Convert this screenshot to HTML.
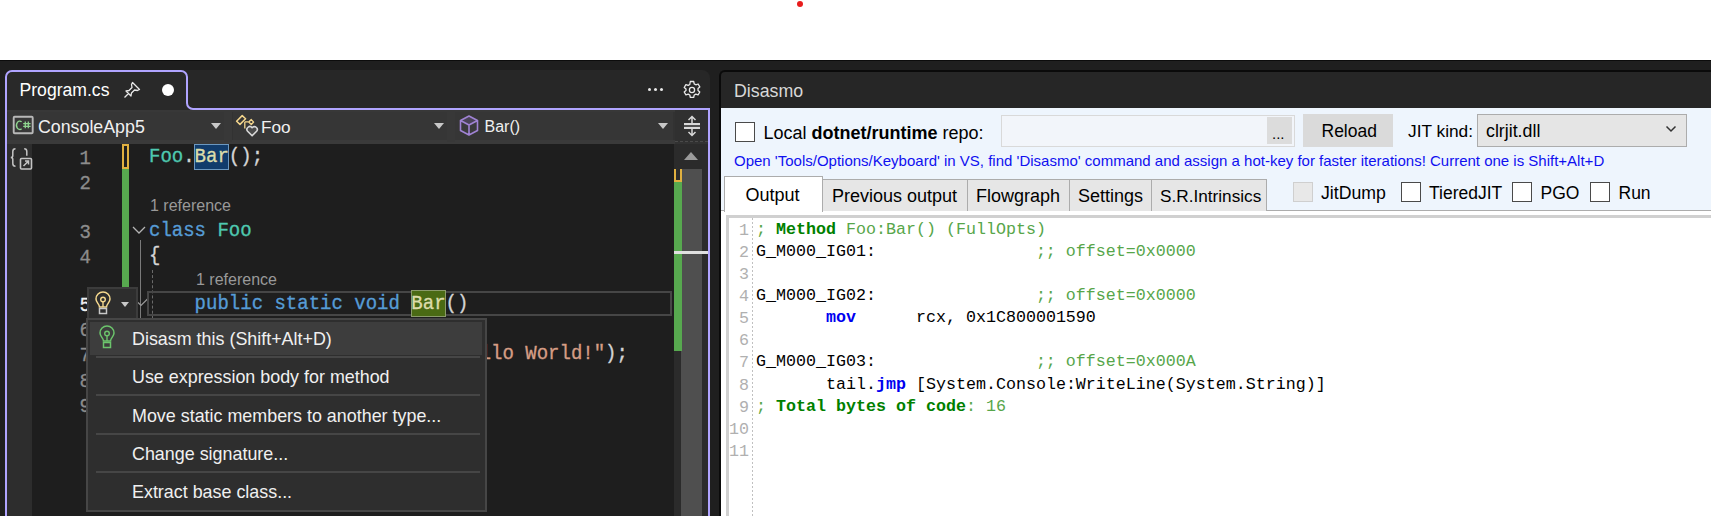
<!DOCTYPE html>
<html><head><meta charset="utf-8">
<style>
*{margin:0;padding:0;box-sizing:border-box}
html,body{width:1711px;height:516px;overflow:hidden;background:#fff;position:relative}
body{font-family:"Liberation Sans",sans-serif}
.a{position:absolute}
.t{position:absolute;line-height:1;white-space:pre;font-family:"Liberation Sans",sans-serif}
.m{position:absolute;line-height:1;white-space:pre;font-family:"Liberation Mono",monospace}
#ide{left:0;top:60px;width:1711px;height:456px;background:#1f1f1f;border-top:1px solid #0c0c0c}
#strip{left:5px;top:70px;width:705px;height:40px;background:#272727;border-radius:8px 8px 0 0}
#tab{left:5px;top:70px;width:183px;height:40px;background:#292929;border:2px solid #b0a4ff;border-bottom:none;border-radius:7px 7px 0 0}
#editframe{left:5px;top:108px;width:705px;height:420px;border:2px solid #b0a4ff;border-bottom:none}
#navbar{left:7px;top:110px;width:701px;height:34px;background:#323232}
.dd{position:absolute;top:112px;height:28px;background:#363636}
.tri{position:absolute;width:0;height:0;border-left:5px solid transparent;border-right:5px solid transparent;border-top:6px solid #c8c8c8}
.c{font-size:21px;color:#d4d4d4;left:149px;-webkit-text-stroke:0.35px currentColor;transform:scaleX(0.9048);transform-origin:0 0}
.ln{font-size:21px;color:#8c8c8c;-webkit-text-stroke:0.3px currentColor;width:60px;left:31px;text-align:right;transform:scaleX(0.9048);transform-origin:100% 0}
.kw{color:#569cd6}.ty{color:#4ec9b0}.me{color:#dcdcaa}.st{color:#d69d85}
.lens{font-size:16px;color:#999}
#rp{left:719px;top:70px;width:992px;height:446px;background:#262626;border-radius:6px 0 0 0;border:2px solid #0a0a0a;border-right:none;border-bottom:none}
#rbody{left:721px;top:108px;width:990px;height:408px;background:#eef5fd}
.tabh{position:absolute;top:179px;height:32px;background:#e6e6e6;border:1px solid #acacac;border-bottom:none}
.cbx{position:absolute;top:182px;width:20px;height:20px;background:#fff;border:1.5px solid #4a4a4a}
.o{font-size:16.67px;color:#000;left:756px}
.oln{font-size:16.67px;color:#b0b0b0;left:700px;width:49px;text-align:right}
.cg{color:#57a64a}.cgb{color:#008000;font-weight:bold}.asm{color:#0000f0;font-weight:bold}
.mi{font-size:17.9px;color:#f0f0f0;left:132px}
.sep{position:absolute;left:96px;width:384px;height:2px;background:#464646}
</style></head>
<body>
<div class="a" style="left:797px;top:1px;width:6px;height:6px;border-radius:50%;background:#e81c1c"></div>

<div id="ide" class="a"></div>
<div id="strip" class="a"></div>
<div class="a" style="left:5px;top:70px;width:183px;height:40px;background:#292929;border-radius:7px 7px 0 0"></div>
<div class="t" style="left:19.5px;top:82.1px;font-size:17.6px;color:#fff">Program.cs</div>
<!-- pin -->
<svg class="a" style="left:123px;top:81px" width="18" height="18" viewBox="0 0 18 18"><path d="M9.5 1.5 L16.5 8.5 L14.5 9.5 L11.5 9 L8.5 12 L8 15 L3 10 L6 9.5 L9 6.5 L8.5 3.5 Z M5.5 12.5 L1.5 16.5" fill="none" stroke="#e8e8e8" stroke-width="1.3" stroke-linejoin="round"/></svg>
<div class="a" style="left:162px;top:84px;width:12px;height:12px;border-radius:50%;background:#fff"></div>
<!-- ... and gear -->
<div class="a" style="left:648px;top:88px;width:3px;height:3px;border-radius:50%;background:#e8e8e8;box-shadow:6px 0 0 #e8e8e8,12px 0 0 #e8e8e8"></div>
<svg class="a" style="left:682px;top:80px" width="20" height="20" viewBox="0 0 20 20"><path d="M8.3 1.5h3.4l.5 2.4 1.6.9 2.3-.8 1.7 2.9-1.8 1.6v1.9l1.8 1.6-1.7 2.9-2.3-.8-1.6.9-.5 2.4H8.3l-.5-2.4-1.6-.9-2.3.8-1.7-2.9 1.8-1.6V9.1L2.2 7.5l1.7-2.9 2.3.8 1.6-.9z" fill="none" stroke="#e8e8e8" stroke-width="1.3" stroke-linejoin="round"/><circle cx="10" cy="10" r="2.6" fill="none" stroke="#e8e8e8" stroke-width="1.3"/></svg>

<!-- nav bar -->
<div id="navbar" class="a"></div>
<div class="a" style="left:7px;top:110px;width:668px;height:2px;background:#383838"></div>
<div class="a" style="left:7px;top:140px;width:668px;height:4px;background:#3a3a3a"></div>
<div class="a" style="left:224px;top:110px;width:8px;height:32px;background:#383838"></div>
<div class="a" style="left:447px;top:110px;width:8px;height:32px;background:#383838"></div>
<div class="dd" style="left:8px;width:216px"></div>
<div class="dd" style="left:233px;width:214px"></div>
<div class="dd" style="left:455px;width:218px"></div>
<div class="a" style="left:675px;top:110px;width:33px;height:32px;background:#303030;border-bottom:1px dashed #4a4a4a"></div>
<!-- C# icon -->
<svg class="a" style="left:10px;top:112px" width="28" height="26" viewBox="10 112 28 26"><rect x="13.7" y="116.8" width="19" height="16.4" rx="1" fill="#383838" stroke="#b8b8b8" stroke-width="1.9"/><path d="M21.6 121.8 A3.3 4.2 0 1 0 21.6 128.8" fill="none" stroke="#8fd68f" stroke-width="1.3"/><path d="M25.3 121.6 V128.2 M28.3 121.6 V128.2 M23.2 123.6 H30.6 M23.2 126.3 H30.6" fill="none" stroke="#8fd68f" stroke-width="1.3"/></svg>
<div class="t" style="left:38px;top:118.5px;font-size:17.8px;color:#f0f0f0">ConsoleApp5</div>
<div class="tri" style="left:211px;top:123px"></div>
<!-- Foo icon -->
<svg class="a" style="left:230px;top:110px" width="32" height="30" viewBox="230 110 32 30"><path d="M236.6 121.2 L242.2 115.6 L245.6 118.8 L240 124.4 Z" fill="none" stroke="#f3d58c" stroke-width="1.5" stroke-linejoin="round"/><path d="M245 121.8 H248.6 M244.8 121.8 V128.6" fill="none" stroke="#f3d58c" stroke-width="1.3"/><path d="M248.8 122.1 L251.3 119.6 L253.6 122.1 L251.3 124.4 Z" fill="none" stroke="#f3d58c" stroke-width="1.4" stroke-linejoin="round"/><path d="M252.1 135.8 L247.6 131.3 A2.8 2.8 0 0 1 252.1 127.7 A2.8 2.8 0 0 1 256.6 131.3 Z" fill="#4a4a4a" stroke="#d8d8d8" stroke-width="1.6" stroke-linejoin="round"/></svg>
<div class="t" style="left:261px;top:118.9px;font-size:17.2px;color:#f0f0f0">Foo</div>
<div class="tri" style="left:434px;top:123px"></div>
<!-- cube icon -->
<svg class="a" style="left:459px;top:115px" width="20" height="21" viewBox="0 0 20 21"><path d="M10 1 L18.5 5.5 L10 10 L1.5 5.5 Z" fill="#4a4358"/><path d="M1.5 5.5 V15.5 L10 20 L18.5 15.5 V5.5 L10 10 Z" fill="#3a3a3c"/><path d="M10 1 L18.5 5.5 V15.5 L10 20 L1.5 15.5 V5.5 Z M1.5 5.5 L10 10 L18.5 5.5 M10 10 V20" fill="none" stroke="#a083d4" stroke-width="1.6" stroke-linejoin="round"/></svg>
<div class="t" style="left:484.5px;top:118.6px;font-size:16px;color:#f0f0f0">Bar()</div>
<div class="tri" style="left:658px;top:123px"></div>
<!-- splitter icon -->
<svg class="a" style="left:683px;top:115px" width="18" height="22" viewBox="0 0 18 22"><path d="M9 1.5 V20.5 M5.5 5 L9 1.5 L12.5 5 M5.5 17 L9 20.5 L12.5 17" fill="none" stroke="#d8d8d8" stroke-width="1.5"/><rect x="1" y="8" width="16" height="2" fill="#d8d8d8"/><rect x="1" y="12" width="16" height="2" fill="#d8d8d8"/><rect x="1" y="10" width="16" height="2" fill="#505050"/></svg>

<!-- editor -->
<div class="a" style="left:7px;top:144px;width:25px;height:372px;background:#2d2d2d"></div>
<div class="a" style="left:32px;top:144px;width:642px;height:372px;background:#1e1e1e"></div>
<!-- {} icon -->
<svg class="a" style="left:0;top:140px" width="40" height="36" viewBox="0 140 40 36"><path d="M15.5 148.8 Q12.8 148.8 12.8 151.5 V155.5 Q12.8 157.5 10.8 157.5 Q12.8 157.5 12.8 159.5 V163.5 Q12.8 166.3 15.5 166.3 M24.2 148.8 Q26.8 148.8 26.8 151.5 V155.8" fill="none" stroke="#c4c4c4" stroke-width="1.5"/><rect x="20.5" y="158.5" width="11" height="10.5" rx="1" fill="none" stroke="#c4c4c4" stroke-width="1.6"/><path d="M23.5 166 L28.5 161 M25 161 H28.5 V164.5" fill="none" stroke="#c4c4c4" stroke-width="1.5"/></svg>
<!-- change bars -->
<div class="a" style="left:122px;top:144px;width:7px;height:25px;border:2px solid #e0b040"></div>
<div class="a" style="left:122px;top:169px;width:7px;height:147px;background:#57a94f"></div>

<div class="m ln" style="top:147.71px">1</div>
<div class="m ln" style="top:173.11px">2</div>
<div class="m ln" style="top:221.81px">3</div>
<div class="m ln" style="top:247.21px">4</div>
<div class="m ln" style="top:294.61px;color:#f0f0f0">5</div>
<div class="m ln" style="top:320.01px">6</div>
<div class="m ln" style="top:345.41px">7</div>
<div class="m ln" style="top:370.81px">8</div>
<div class="m ln" style="top:396.21px">9</div>

<!-- selection on Bar line 1 -->
<div class="a" style="left:194px;top:144px;width:35px;height:26px;background:#113c6c;border:1px solid #6c98c0"></div>
<div class="m c" style="top:145.71px"><span class="ty">Foo</span>.<span class="me">Bar</span>();</div>
<div class="t lens" style="left:150px;top:197.57px">1 reference</div>
<!-- fold chevron -->
<svg class="a" style="left:132px;top:225px" width="14" height="10" viewBox="0 0 14 10"><path d="M1 2 L7 8 L13 2" fill="none" stroke="#b4b4b4" stroke-width="1.3"/></svg>
<div class="a" style="left:140px;top:240px;width:1px;height:170px;background:#7a7a7a"></div>
<div class="m c" style="top:219.81px"><span class="kw">class</span> <span class="ty">Foo</span></div>
<div class="m c" style="top:245.21px">{</div>
<div class="a" style="left:152px;top:270px;width:0;height:120px;border-left:1px dashed #6a6a6a"></div>
<div class="t lens" style="left:196px;top:272px">1 reference</div>
<svg class="a" style="left:136px;top:296px" width="14" height="12" viewBox="0 0 14 12"><path d="M2 6.5 L5 9.5 L12 2.5" fill="none" stroke="#9a9a9a" stroke-width="1.2"/></svg>
<!-- current line box -->
<div class="a" style="left:147px;top:291px;width:525px;height:25px;border:2px solid #464646"></div>
<div class="a" style="left:411px;top:290px;width:35px;height:27px;background:#4a6a14;border:1px solid #8a9a6a"></div>
<div class="m c" style="top:292.61px">    <span class="kw">public</span> <span class="kw">static</span> <span class="kw">void</span> <span class="me">Bar</span>()</div>
<div class="m c" style="top:318.01px">    {</div>
<div class="m c" style="top:343.41px">        Console.WriteLine(<span class="st">"Hello World!"</span>);</div>
<div class="m c" style="top:368.81px">    }</div>
<div class="m c" style="top:394.21px">}</div>

<!-- scrollbar -->
<div class="a" style="left:674px;top:144px;width:34px;height:372px;background:#2b2b2b"></div>
<div class="a" style="left:684px;top:152px;width:0;height:0;border-left:7px solid transparent;border-right:7px solid transparent;border-bottom:8px solid #9a9a9a"></div>
<div class="a" style="left:681px;top:169px;width:21px;height:347px;background:#4f4f4f"></div>
<div class="a" style="left:674px;top:169px;width:8px;height:13px;border:2px solid #e0b040;border-top:none"></div>
<div class="a" style="left:674px;top:182px;width:8px;height:169px;background:#57a94f"></div>
<div class="a" style="left:674px;top:251px;width:34px;height:3px;background:#e0e0e0"></div>

<!-- lightbulb button -->
<div class="a" style="left:87px;top:287px;width:51px;height:32px;background:#2d2d2d;border:2px solid #3c3c3c;border-bottom:none"></div>
<svg class="a" style="left:93px;top:291px" width="20" height="24" viewBox="0 0 20 24"><path d="M6.5 16 C6.5 13 3 11.5 3 8 A7 7 0 0 1 17 8 C17 11.5 13.5 13 13.5 16 Z" fill="none" stroke="#f5d88e" stroke-width="1.5"/><circle cx="10" cy="8.5" r="2.3" fill="none" stroke="#f5d88e" stroke-width="1.4"/><path d="M10 11 V16" stroke="#f5d88e" stroke-width="1.4"/><rect x="6.5" y="17.5" width="7" height="5" fill="none" stroke="#c8c8c8" stroke-width="1.5"/></svg>
<div class="tri" style="left:121px;top:302px;border-left-width:4.5px;border-right-width:4.5px;border-top-width:5px"></div>

<!-- popup -->
<div class="a" style="left:86px;top:318px;width:401px;height:194px;background:#2e2e2e;border:2px solid #464646"></div>
<div class="a" style="left:90px;top:322px;width:392px;height:33px;background:#3d3d3d"></div>
<svg class="a" style="left:97px;top:325px" width="20" height="24" viewBox="0 0 20 24"><path d="M6.5 16 C6.5 13 3 11.5 3 8 A7 7 0 0 1 17 8 C17 11.5 13.5 13 13.5 16 Z" fill="none" stroke="#6cc46c" stroke-width="1.5"/><circle cx="10" cy="8.5" r="2.3" fill="none" stroke="#6cc46c" stroke-width="1.4"/><path d="M10 11 V16" stroke="#6cc46c" stroke-width="1.4"/><rect x="6.5" y="17.5" width="7" height="5" fill="none" stroke="#6cc46c" stroke-width="1.5"/></svg>
<div class="sep" style="top:356px"></div>
<div class="sep" style="top:394px"></div>
<div class="sep" style="top:433px"></div>
<div class="sep" style="top:471px"></div>
<div class="t mi" style="top:331px">Disasm this (Shift+Alt+D)</div>
<div class="t mi" style="top:369px">Use expression body for method</div>
<div class="t mi" style="top:407.8px">Move static members to another type...</div>
<div class="t mi" style="top:445.5px">Change signature...</div>
<div class="t mi" style="top:483.5px">Extract base class...</div>

<svg class="a" style="left:0;top:0" width="720" height="516"><path d="M6 516 V77 A6 6 0 0 1 12 71 H181 A6 6 0 0 1 187 77 V103 A6 6 0 0 0 193 109 H709 V516" fill="none" stroke="#b0a4ff" stroke-width="2"/></svg>
<!-- RIGHT PANEL -->
<div id="rp" class="a"></div>
<div class="t" style="left:734px;top:82.6px;font-size:17.8px;color:#d8d8d8">Disasmo</div>
<div id="rbody" class="a"></div>

<div class="a" style="left:735px;top:122px;width:20px;height:20px;background:#fff;border:1.5px solid #4a4a4a"></div>
<div class="t" style="left:763.5px;top:123.85px;font-size:18px;color:#000">Local <b>dotnet/runtime</b> repo:</div>
<div class="a" style="left:1001px;top:115px;width:294px;height:32px;background:#f2f5fa;border:1px solid #d9d9d9"></div>
<div class="a" style="left:1267px;top:117px;width:25px;height:27px;background:#dcdcdc"></div>
<div class="t" style="left:1272px;top:126px;font-size:15px;color:#000">...</div>
<div class="a" style="left:1303px;top:114px;width:90px;height:33px;background:#dadada"></div>
<div class="t" style="left:1321.5px;top:122.88px;font-size:17.5px;color:#000">Reload</div>
<div class="t" style="left:1408px;top:122.88px;font-size:17.3px;color:#000">JIT kind:</div>
<div class="a" style="left:1477px;top:114px;width:210px;height:33px;background:#e5e5e5;border:1px solid #acacac"></div>
<div class="t" style="left:1486px;top:123.45px;font-size:17.8px;color:#000">clrjit.dll</div>
<svg class="a" style="left:1665px;top:125px" width="12" height="8" viewBox="0 0 12 8"><path d="M1.5 1.5 L6 6 L10.5 1.5" fill="none" stroke="#333" stroke-width="1.5"/></svg>
<div class="t" style="left:734px;top:153.09px;font-size:15px;color:#1010f0">Open 'Tools/Options/Keyboard' in VS, find 'Disasmo' command and assign a hot-key for faster iterations! Current one is Shift+Alt+D</div>

<!-- tabs -->
<div class="a" style="left:721px;top:210px;width:990px;height:1px;background:#acacac"></div>
<div class="a" style="left:721px;top:211px;width:990px;height:305px;background:#fff"></div>
<div class="tabh" style="left:822px;width:146px"></div>
<div class="tabh" style="left:967px;width:103px"></div>
<div class="tabh" style="left:1069px;width:83px"></div>
<div class="tabh" style="left:1151px;width:116px"></div>
<div class="a" style="left:724px;top:176px;width:99px;height:36px;background:#fff;border:1px solid #acacac;border-bottom:none"></div>
<div class="t" style="left:745.5px;top:185.75px;font-size:18px;color:#000">Output</div>
<div class="t" style="left:832px;top:187.25px;font-size:18px;color:#000">Previous output</div>
<div class="t" style="left:976px;top:187.25px;font-size:18px;color:#000">Flowgraph</div>
<div class="t" style="left:1078px;top:187.25px;font-size:18px;color:#000">Settings</div>
<div class="t" style="left:1160px;top:187.6px;font-size:17.2px;color:#000">S.R.Intrinsics</div>

<div class="a" style="left:1293px;top:182px;width:20px;height:20px;background:#e8e8e8;border:1px solid #cfcfcf"></div>
<div class="t" style="left:1321px;top:184.6px;font-size:17.7px;color:#000">JitDump</div>
<div class="cbx" style="left:1401px"></div>
<div class="t" style="left:1429px;top:184.6px;font-size:17.5px;color:#000">TieredJIT</div>
<div class="cbx" style="left:1512px"></div>
<div class="t" style="left:1540.5px;top:184.6px;font-size:17.5px;color:#000">PGO</div>
<div class="cbx" style="left:1590px"></div>
<div class="t" style="left:1618.5px;top:184.6px;font-size:17.5px;color:#000">Run</div>

<!-- output box -->
<div class="a" style="left:726px;top:215px;width:985px;height:301px;border-top:3px solid #d0d0d0;border-left:3px solid #d0d0d0;background:#fff"></div>
<div class="a" style="left:752px;top:218px;width:1px;height:298px;background:repeating-linear-gradient(#c0c0c0 0 2px,transparent 2px 4px)"></div>
<div class="m oln" style="top:222.83px">1</div>
<div class="m oln" style="top:244.93px">2</div>
<div class="m oln" style="top:267.03px">3</div>
<div class="m oln" style="top:289.13px">4</div>
<div class="m oln" style="top:311.23px">5</div>
<div class="m oln" style="top:333.33px">6</div>
<div class="m oln" style="top:355.43px">7</div>
<div class="m oln" style="top:377.53px">8</div>
<div class="m oln" style="top:399.63px">9</div>
<div class="m oln" style="top:421.73px">10</div>
<div class="m oln" style="top:443.83px">11</div>
<div class="m o" style="top:221.83px"><span class="cg">; </span><span class="cgb">Method</span><span class="cg"> Foo:Bar() (FullOpts)</span></div>
<div class="m o" style="top:243.93px">G_M000_IG01:                <span class="cg">;; offset=0x0000</span></div>
<div class="m o" style="top:288.13px">G_M000_IG02:                <span class="cg">;; offset=0x0000</span></div>
<div class="m o" style="top:310.23px">       <span class="asm">mov</span>      rcx, 0x1C800001590</div>
<div class="m o" style="top:354.43px">G_M000_IG03:                <span class="cg">;; offset=0x000A</span></div>
<div class="m o" style="top:376.53px">       tail.<span class="asm">jmp</span> [System.Console:WriteLine(System.String)]</div>
<div class="m o" style="top:398.63px"><span class="cg">; </span><span class="cgb">Total bytes of code</span><span class="cg">: 16</span></div>
</body></html>
